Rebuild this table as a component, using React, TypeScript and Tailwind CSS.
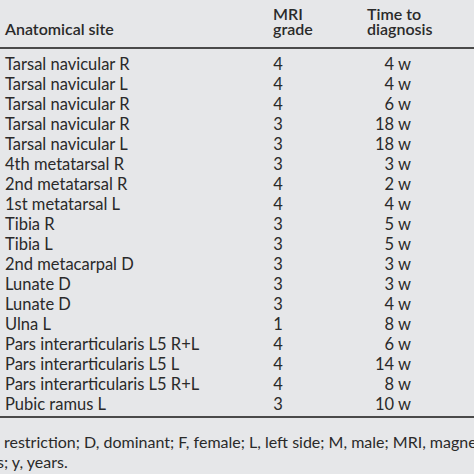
const rows: [string, string, string][] = [
  ["Tarsal navicular R", "4", "4 w"],
  ["Tarsal navicular L", "4", "4 w"],
  ["Tarsal navicular R", "4", "6 w"],
  ["Tarsal navicular R", "3", "18 w"],
  ["Tarsal navicular L", "3", "18 w"],
  ["4th metatarsal R", "3", "3 w"],
  ["2nd metatarsal R", "4", "2 w"],
  ["1st metatarsal L", "4", "4 w"],
  ["Tibia R", "3", "5 w"],
  ["Tibia L", "3", "5 w"],
  ["2nd metacarpal D", "3", "3 w"],
  ["Lunate D", "3", "3 w"],
  ["Lunate D", "3", "4 w"],
  ["Ulna L", "1", "8 w"],
  ["Pars interarticularis L5 R+L", "4", "6 w"],
  ["Pars interarticularis L5 L", "4", "14 w"],
  ["Pars interarticularis L5 R+L", "4", "8 w"],
  ["Pubic ramus L", "3", "10 w"],
];

export default function App() {
  return (
    <div
      className="w-[474px] h-[474px] overflow-hidden bg-[#e6e7e9] text-[#2a2a2a]"
      style={{ fontFamily: "Lato, 'Open Sans', sans-serif" }}
    >
      {/* header */}
      <div className="flex h-[47px] items-end pb-[11px] text-[16px] leading-[15px] font-semibold">
        <div className="w-[273px] pl-[5px]">Anatomical site</div>
        <div className="w-[94px]">
          MRI
          <br />
          grade
        </div>
        <div>
          Time to
          <br />
          diagnosis
        </div>
      </div>
      <div className="h-[2px] bg-[#4a4a4a]" />

      {/* body */}
      <div className="pt-[5px] pb-[2px] text-[16.5px]">
        {rows.map((r, i) => (
          <div key={i} className="flex h-[20px] items-center">
            <div className="w-[273px] pl-[5px] whitespace-nowrap">{r[0]}</div>
            <div className="w-[10px] text-center">{r[1]}</div>
            <div className="w-[128px] text-right">{r[2]}</div>
          </div>
        ))}
      </div>
      <div className="h-[2px] bg-[#4a4a4a]" />

      {/* footnote */}
      <div className="pt-[14px] text-[16px] leading-[20px] whitespace-nowrap">
        <div className="pl-[4px]">
          restriction; D, dominant; F, female; L, left side; M, male; MRI, magnetic resonance imaging;
        </div>
        <div className="-ml-[3px]">s; y, years.</div>
      </div>
    </div>
  );
}
